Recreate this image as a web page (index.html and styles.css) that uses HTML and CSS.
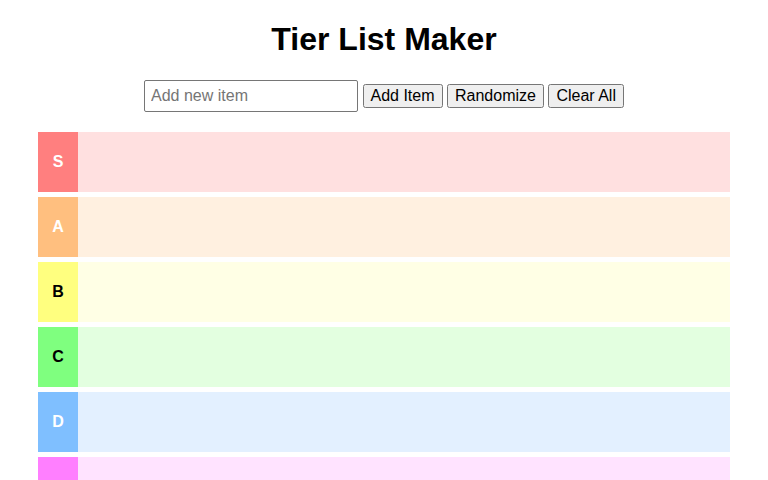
FILE: index.html
```html
<!DOCTYPE html>
<html lang="en">
<head>
    <meta charset="UTF-8">
    <meta name="viewport" content="width=device-width, initial-scale=1.0">
    <title>Tier List Maker</title>
    <link rel="stylesheet" href="styles.css">
</head>
<body>
    <h1>Tier List Maker</h1>

    <div class="controls">
        <input type="text" id="itemInput" placeholder="Add new item">
        <button id="addBtn">Add Item</button>
        <button id="randomBtn">Randomize</button>
        <button id="clearBtn">Clear All</button>
    </div>

    <div class="tier-list" id="tierList">
        <div class="tier tier-s">
            <div class="tier-label">S</div>
            <div class="tier-items"></div>
        </div>
        <div class="tier tier-a">
            <div class="tier-label">A</div>
            <div class="tier-items"></div>
        </div>
        <div class="tier tier-b">
            <div class="tier-label">B</div>
            <div class="tier-items"></div>
        </div>
        <div class="tier tier-c">
            <div class="tier-label">C</div>
            <div class="tier-items"></div>
        </div>
        <div class="tier tier-d">
            <div class="tier-label">D</div>
            <div class="tier-items"></div>
        </div>
        <div class="tier tier-e">
            <div class="tier-label">E</div>
            <div class="tier-items"></div>
        </div>
    </div>
</body>
</html>
```

FILE: styles.css
```css
body {
    margin: 0;
    font-family: "Liberation Sans", Arial, sans-serif;
    background-color: #fff;
    color: #000;
}

h1 {
    text-align: center;
    font-size: 32px;
    margin: 21px 0 22px;
}

.controls {
    text-align: center;
    margin-bottom: 20px;
}

.controls input {
    width: 200px;
    padding: 6px;
    font-size: 16px;
    font-family: inherit;
    border: 1px solid #767676;
    border-radius: 2px;
}

.controls button {
    font-size: 16px;
    font-family: inherit;
}

.tier-list {
    margin: 0 38px;
}

.tier {
    display: flex;
    height: 60px;
    margin-bottom: 5px;
}

.tier-label {
    width: 40px;
    display: flex;
    align-items: center;
    justify-content: center;
    font-weight: bold;
    font-size: 16px;
    color: #fff;
}

.tier-items {
    flex: 1;
}

/* tier colours */
.tier-s .tier-label { background-color: #ff7f7f; }
.tier-s .tier-items { background-color: #ffe0e0; }

.tier-a .tier-label { background-color: #ffbf7f; }
.tier-a .tier-items { background-color: #fff0e0; }

.tier-b .tier-label { background-color: #ffff7f; color: #000; }
.tier-b .tier-items { background-color: #ffffe5; }

.tier-c .tier-label { background-color: #7fff7f; color: #000; }
.tier-c .tier-items { background-color: #e3ffe0; }

.tier-d .tier-label { background-color: #7fbfff; }
.tier-d .tier-items { background-color: #e3f0ff; }

.tier-e .tier-label { background-color: #ff7fff; }
.tier-e .tier-items { background-color: #ffe3ff; }
```
